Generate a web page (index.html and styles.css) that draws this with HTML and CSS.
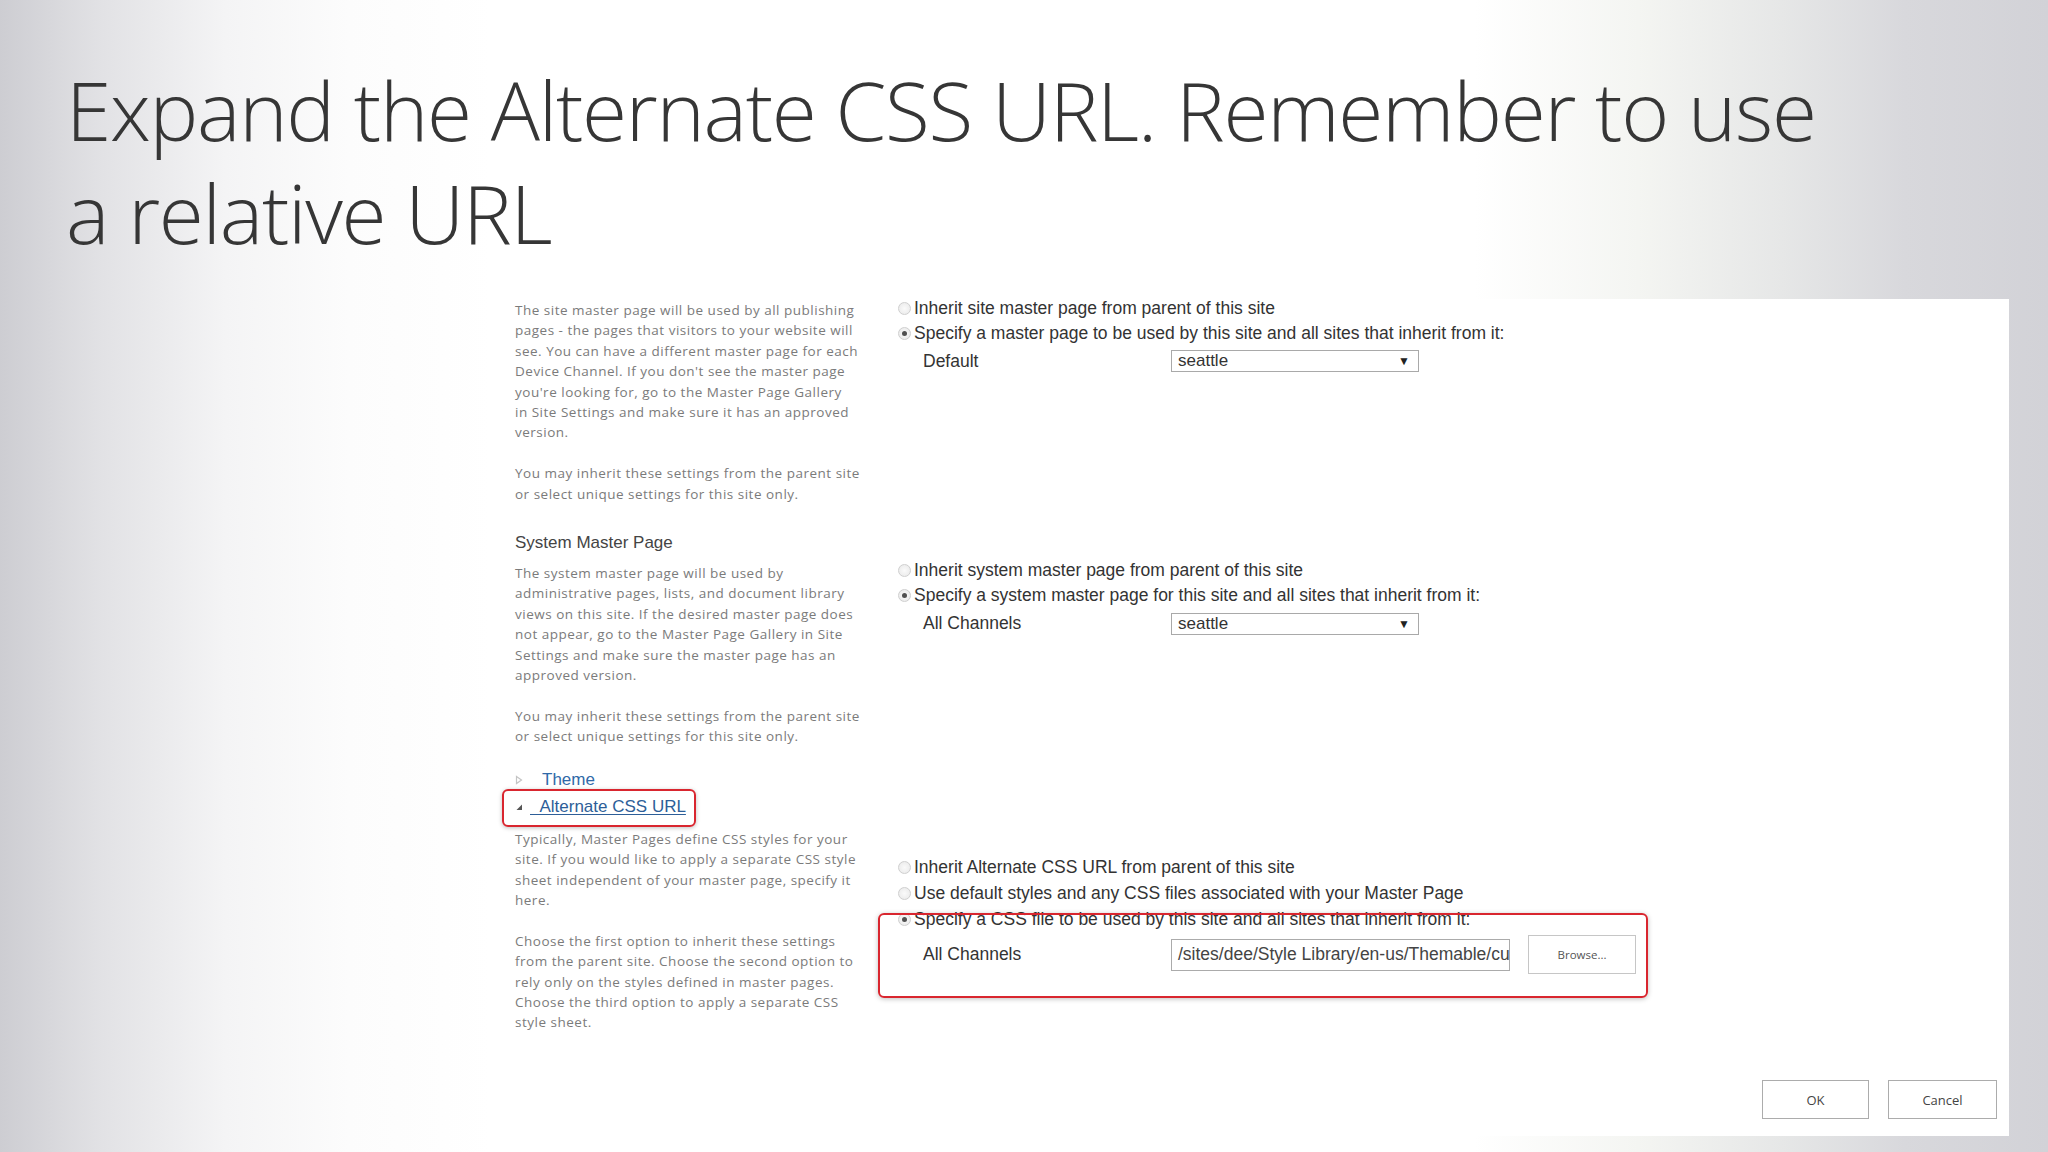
FILE: index.html
```html
<!DOCTYPE html>
<html lang="en">
<head>
<meta charset="utf-8">
<title>Alternate CSS URL</title>
<link rel="stylesheet" href="styles.css">
</head>
<body>
<h1 class="title"><span class="tline">Expand the Alternate CSS URL. Remember to use</span><span class="tline">a relative URL</span></h1>
<div class="panel">
  <div class="cols">
    <div class="desc">
      <p class="p1">The site master page will be used by all publishing<br>pages - the pages that visitors to your website will<br>see. You can have a different master page for each<br>Device Channel. If you don't see the master page<br>you're looking for, go to the Master Page Gallery<br>in Site Settings and make sure it has an approved<br>version.</p>
      <p class="gap">You may inherit these settings from the parent site<br>or select unique settings for this site only.</p>
      <h3 class="sec-title">System Master Page</h3>
      <p class="p3">The system master page will be used by<br>administrative pages, lists, and document library<br>views on this site. If the desired master page does<br>not appear, go to the Master Page Gallery in Site<br>Settings and make sure the master page has an<br>approved version.</p>
      <p class="gap">You may inherit these settings from the parent site<br>or select unique settings for this site only.</p>
      <div class="links">
        <div class="link-row theme-row">
          <span class="tri"><svg width="8" height="10" viewBox="0 0 8 10"><path d="M1.5 1.5 L6.5 5 L1.5 8.5 Z" fill="none" stroke="#c4c4c4" stroke-width="1.2"/></svg></span>
          <span class="link theme-link">Theme</span>
        </div>
        <div class="link-row alt-row">
          <span class="tri"><svg width="8" height="8" viewBox="0 0 8 8"><path d="M7 1.5 L7 7 L1.5 7 Z" fill="#555"/></svg></span>
          <span class="link alt-link">&nbsp;&nbsp;Alternate CSS URL</span>
        </div>
      </div>
      <p class="p5">Typically, Master Pages define CSS styles for your<br>site. If you would like to apply a separate CSS style<br>sheet independent of your master page, specify it<br>here.</p>
      <p class="gap">Choose the first option to inherit these settings<br>from the parent site. Choose the second option to<br>rely only on the styles defined in master pages.<br>Choose the third option to apply a separate CSS<br>style sheet.</p>
    </div>
    <div class="opts">
      <div class="group g1">
        <div class="opt"><span class="radio"></span>Inherit site master page from parent of this site</div>
        <div class="opt"><span class="radio on"></span>Specify a master page to be used by this site and all sites that inherit from it:</div>
        <div class="channel c1"><span class="ch-label">Default</span><div class="select"><span>seattle</span><span class="arrow">&#9660;</span></div></div>
      </div>
      <div class="group g2">
        <div class="opt"><span class="radio"></span>Inherit system master page from parent of this site</div>
        <div class="opt"><span class="radio on"></span>Specify a system master page for this site and all sites that inherit from it:</div>
        <div class="channel c2"><span class="ch-label">All Channels</span><div class="select"><span>seattle</span><span class="arrow">&#9660;</span></div></div>
      </div>
      <div class="group g3">
        <div class="opt"><span class="radio"></span>Inherit Alternate CSS URL from parent of this site</div>
        <div class="opt o2"><span class="radio"></span>Use default styles and any CSS files associated with your Master Page</div>
        <div class="highlight">
          <div class="opt o3"><span class="radio on"></span>Specify a CSS file to be used by this site and all sites that inherit from it:</div>
          <div class="channel c3"><span class="ch-label">All Channels</span><div class="textbox">/sites/dee/Style Library/en-us/Themable/custom.css</div><div class="browse">Browse...</div></div>
        </div>
      </div>
    </div>
  </div>
  <div class="actions">
    <div class="btn ok">OK</div>
    <div class="btn cancel">Cancel</div>
  </div>
</div>
</body>
</html>
```
FILE: styles.css
```css
html, body {
  margin: 0;
  padding: 0;
}
body {
  width: 2048px;
  height: 1152px;
  overflow: hidden;
  background: linear-gradient(90deg, #cdcdd2 0%, #e2e2e5 5%, #f4f4f5 11%, #fcfcfc 17%, #ffffff 24%, #ffffff 72%, #f4f5f2 80%, #e6e7e7 87%, #d8d8dc 93%, #d2d2d7 100%);
  font-family: "Liberation Sans", Arial, sans-serif;
}
.title {
  margin: 0;
  padding: 0 0 0 66px;
  font-family: "Open Sans", "Noto Sans", sans-serif;
  font-weight: 300;
  font-size: 82px;
  color: #363636;
  letter-spacing: -1.3px;
  white-space: nowrap;
}
.tline {
  display: block;
  height: 103px;
  line-height: 103px;
  overflow: visible;
}
.tline:first-child { margin-top: 58px; }
.panel {
  margin: 35px 0 0 480px;
  width: 1529px;
  height: 837px;
  background: linear-gradient(90deg, rgba(255,255,255,0) 0px, #ffffff 40px);
  display: flex;
  flex-direction: column;
}
.cols {
  display: grid;
  grid-template-columns: 383px 1fr;
  padding-left: 35px;
}
.desc p {
  margin: 0;
  font-family: "Open Sans", "Noto Sans", sans-serif;
  font-size: 13.5px;
  letter-spacing: 0.5px;
  line-height: 20.4px;
  color: #7b7b7b;
  white-space: nowrap;
}
.desc .p1 { margin-top: 1px; }
.desc .gap { margin-top: 20.4px; }
.sec-title {
  margin: 28px 0 0 0;
  font-family: "Liberation Sans", Arial, sans-serif;
  font-weight: normal;
  font-size: 17px;
  line-height: 22px;
  color: #444;
}
.desc .p3 { margin-top: 9px; }
.links { margin-top: 20px; }
.link-row {
  display: flex;
  align-items: center;
  font-family: "Liberation Sans", Arial, sans-serif;
  font-size: 17px;
}
.theme-row { height: 26px; }
.alt-row { height: 28px; position: relative; }
.alt-row::after {
  content: "";
  position: absolute;
  left: -13px;
  top: -4px;
  width: 194px;
  height: 38px;
  box-sizing: border-box;
  border: 2.5px solid #d9262f;
  border-radius: 6px;
  box-shadow: 0 1px 4px rgba(0,0,0,0.25);
}
.tri {
  width: 15px;
  display: flex;
  align-items: center;
}
.link { color: #2f69a8; }
.theme-link { padding-left: 12px; }
.alt-link { text-decoration: underline; text-underline-offset: 2px; color: #2d5e98; }
.desc .p5 { margin-top: 8px; }

.opts {
  margin-top: -3px;
  font-family: "Liberation Sans", Arial, sans-serif;
  font-size: 17.5px;
  color: #333;
}
.opt {
  height: 25px;
  display: flex;
  align-items: center;
  white-space: nowrap;
}
.radio {
  width: 13px;
  height: 13px;
  box-sizing: border-box;
  border-radius: 50%;
  border: 1px solid #cfcfcf;
  background: radial-gradient(circle, #fafafa 0%, #e8e8e8 100%);
  margin-right: 3px;
  flex: none;
  position: relative;
}
.radio.on::after {
  content: "";
  position: absolute;
  left: 3px;
  top: 3px;
  width: 5px;
  height: 5px;
  border-radius: 50%;
  background: #505050;
}
.channel {
  display: flex;
  align-items: center;
  margin-left: 25px;
}
.ch-label { width: 248px; flex: none; }
.c1 { margin-top: 4px; }
.c2 { margin-top: 5px; }
.c3 { margin-top: 3px; height: 39px; }
.g2 { margin-top: 185.5px; }
.g3 { margin-top: 220.5px; }
.o2 { margin-top: 1px; }
.select {
  width: 248px;
  height: 22px;
  box-sizing: border-box;
  border: 1px solid #a9a9a9;
  display: flex;
  align-items: center;
  justify-content: space-between;
  padding: 0 8px 0 6px;
  color: #333;
  font-size: 17px;
}
.arrow { font-size: 12px; color: #222; }
.highlight { position: relative; }
.highlight::after {
  content: "";
  position: absolute;
  left: -20px;
  top: 5.5px;
  width: 770px;
  height: 85px;
  box-sizing: border-box;
  border: 2.5px solid #d9262f;
  border-radius: 6px;
  box-shadow: 0 1px 5px rgba(0,0,0,0.25);
  pointer-events: none;
}
.o3 { margin-top: 1px; }
.textbox {
  width: 339px;
  height: 32px;
  box-sizing: border-box;
  border: 1px solid #ababab;
  padding: 0 6px;
  display: flex;
  align-items: center;
  overflow: hidden;
  white-space: nowrap;
  color: #444;
  flex: none;
}
.browse {
  margin-left: 18px;
  width: 108px;
  height: 39px;
  box-sizing: border-box;
  border: 1px solid #c6c6c6;
  background: #fff;
  display: flex;
  align-items: center;
  justify-content: center;
  font-family: "Open Sans", "Noto Sans", sans-serif;
  font-size: 11.5px;
  color: #555;
  flex: none;
}
.actions {
  margin-top: auto;
  display: flex;
  justify-content: flex-end;
  gap: 19px;
  padding: 0 12px 17px 0;
}
.btn {
  height: 39px;
  box-sizing: border-box;
  border: 1px solid #acacac;
  background: #fff;
  display: flex;
  align-items: center;
  justify-content: center;
  font-family: "Open Sans", "Noto Sans", sans-serif;
  font-size: 13px;
  color: #444;
}
.ok { width: 107px; }
.cancel { width: 109px; }
```
